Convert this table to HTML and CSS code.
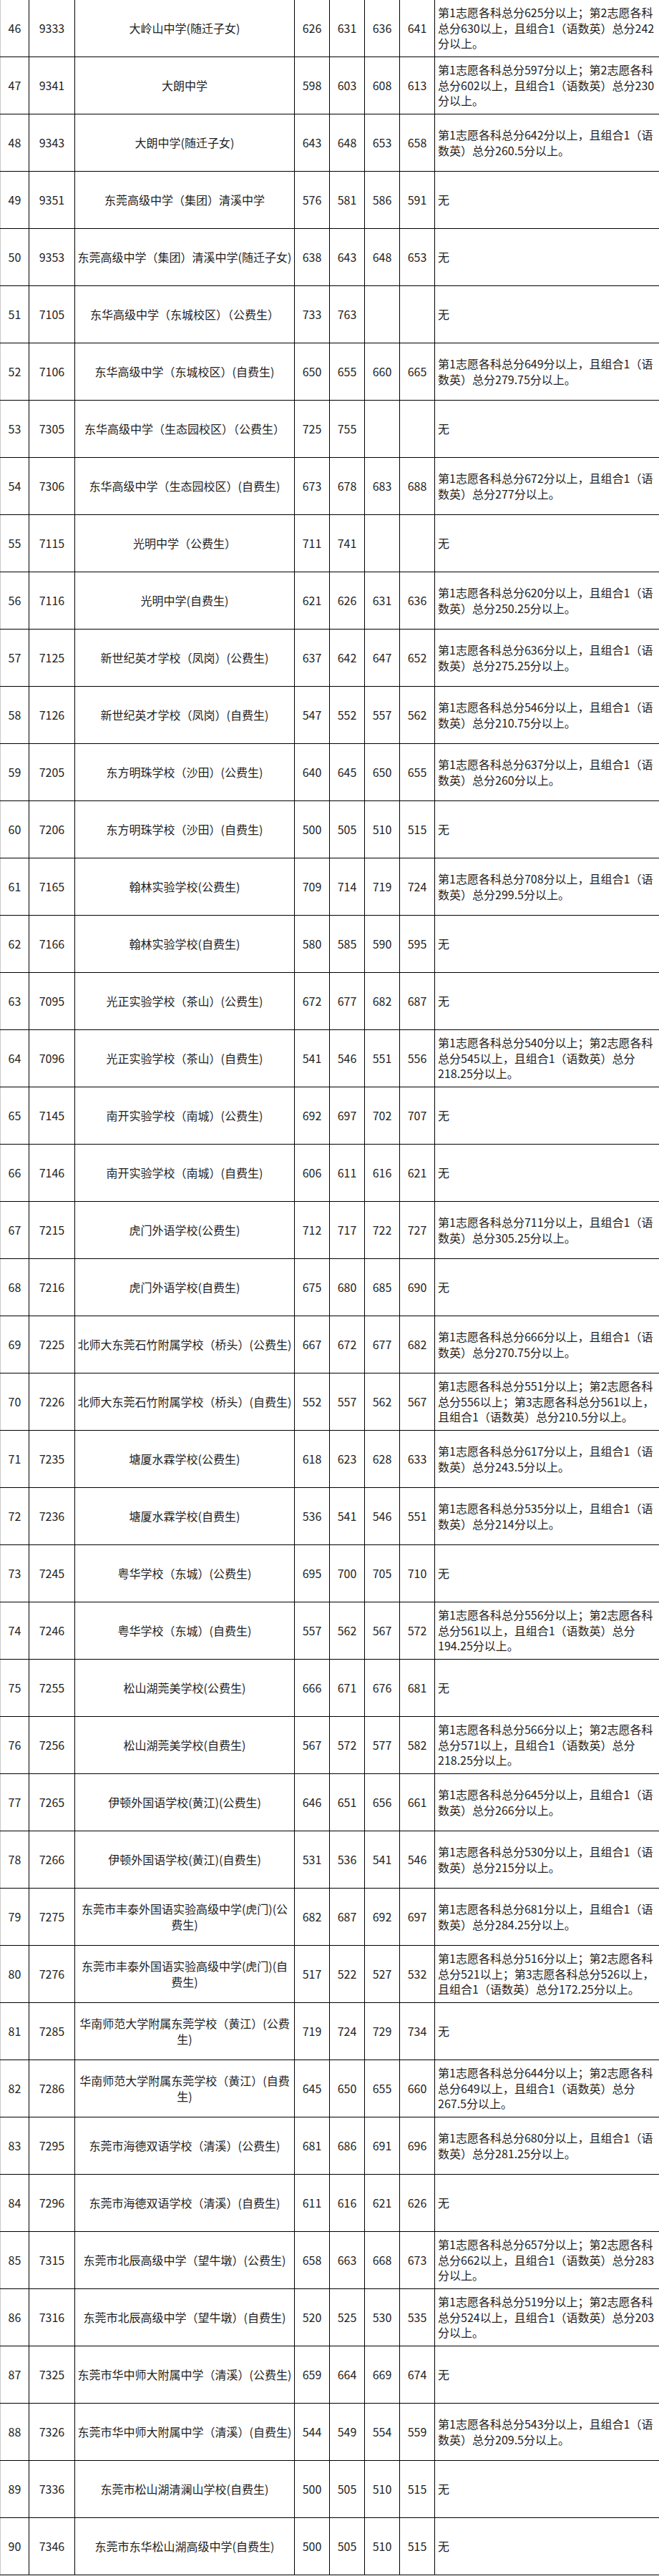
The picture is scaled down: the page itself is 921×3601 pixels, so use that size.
FILE: index.html
```html
<!DOCTYPE html>
<html lang="zh-CN">
<head>
<meta charset="utf-8">
<title>录取分数线</title>
<link rel="stylesheet" href="styles.css">
</head>
<body>
<table class="sheet">
<colgroup>
<col class="c-idx"><col class="c-code"><col class="c-name"><col class="c-s"><col class="c-s"><col class="c-s"><col class="c-s"><col class="c-rem">
</colgroup>
<tbody>
<tr><td>46</td><td>9333</td><td>大岭山中学(随迁子女)</td><td>626</td><td>631</td><td>636</td><td>641</td><td class="rem">第1志愿各科总分625分以上；第2志愿各科<br>总分630以上，且组合1（语数英）总分242<br>分以上。</td></tr>
<tr><td>47</td><td>9341</td><td>大朗中学</td><td>598</td><td>603</td><td>608</td><td>613</td><td class="rem">第1志愿各科总分597分以上；第2志愿各科<br>总分602以上，且组合1（语数英）总分230<br>分以上。</td></tr>
<tr><td>48</td><td>9343</td><td>大朗中学(随迁子女)</td><td>643</td><td>648</td><td>653</td><td>658</td><td class="rem">第1志愿各科总分642分以上，且组合1（语<br>数英）总分260.5分以上。</td></tr>
<tr><td>49</td><td>9351</td><td>东莞高级中学（集团）清溪中学</td><td>576</td><td>581</td><td>586</td><td>591</td><td class="rem">无</td></tr>
<tr><td>50</td><td>9353</td><td>东莞高级中学（集团）清溪中学(随迁子女)</td><td>638</td><td>643</td><td>648</td><td>653</td><td class="rem">无</td></tr>
<tr><td>51</td><td>7105</td><td>东华高级中学（东城校区）（公费生）</td><td>733</td><td>763</td><td></td><td></td><td class="rem">无</td></tr>
<tr><td>52</td><td>7106</td><td>东华高级中学（东城校区）(自费生)</td><td>650</td><td>655</td><td>660</td><td>665</td><td class="rem">第1志愿各科总分649分以上，且组合1（语<br>数英）总分279.75分以上。</td></tr>
<tr><td>53</td><td>7305</td><td>东华高级中学（生态园校区）（公费生）</td><td>725</td><td>755</td><td></td><td></td><td class="rem">无</td></tr>
<tr><td>54</td><td>7306</td><td>东华高级中学（生态园校区）(自费生)</td><td>673</td><td>678</td><td>683</td><td>688</td><td class="rem">第1志愿各科总分672分以上，且组合1（语<br>数英）总分277分以上。</td></tr>
<tr><td>55</td><td>7115</td><td>光明中学（公费生）</td><td>711</td><td>741</td><td></td><td></td><td class="rem">无</td></tr>
<tr><td>56</td><td>7116</td><td>光明中学(自费生)</td><td>621</td><td>626</td><td>631</td><td>636</td><td class="rem">第1志愿各科总分620分以上，且组合1（语<br>数英）总分250.25分以上。</td></tr>
<tr><td>57</td><td>7125</td><td>新世纪英才学校（凤岗）(公费生)</td><td>637</td><td>642</td><td>647</td><td>652</td><td class="rem">第1志愿各科总分636分以上，且组合1（语<br>数英）总分275.25分以上。</td></tr>
<tr><td>58</td><td>7126</td><td>新世纪英才学校（凤岗）(自费生)</td><td>547</td><td>552</td><td>557</td><td>562</td><td class="rem">第1志愿各科总分546分以上，且组合1（语<br>数英）总分210.75分以上。</td></tr>
<tr><td>59</td><td>7205</td><td>东方明珠学校（沙田）(公费生)</td><td>640</td><td>645</td><td>650</td><td>655</td><td class="rem">第1志愿各科总分637分以上，且组合1（语<br>数英）总分260分以上。</td></tr>
<tr><td>60</td><td>7206</td><td>东方明珠学校（沙田）(自费生)</td><td>500</td><td>505</td><td>510</td><td>515</td><td class="rem">无</td></tr>
<tr><td>61</td><td>7165</td><td>翰林实验学校(公费生)</td><td>709</td><td>714</td><td>719</td><td>724</td><td class="rem">第1志愿各科总分708分以上，且组合1（语<br>数英）总分299.5分以上。</td></tr>
<tr><td>62</td><td>7166</td><td>翰林实验学校(自费生)</td><td>580</td><td>585</td><td>590</td><td>595</td><td class="rem">无</td></tr>
<tr><td>63</td><td>7095</td><td>光正实验学校（茶山）(公费生)</td><td>672</td><td>677</td><td>682</td><td>687</td><td class="rem">无</td></tr>
<tr><td>64</td><td>7096</td><td>光正实验学校（茶山）(自费生)</td><td>541</td><td>546</td><td>551</td><td>556</td><td class="rem">第1志愿各科总分540分以上；第2志愿各科<br>总分545以上，且组合1（语数英）总分<br>218.25分以上。</td></tr>
<tr><td>65</td><td>7145</td><td>南开实验学校（南城）(公费生)</td><td>692</td><td>697</td><td>702</td><td>707</td><td class="rem">无</td></tr>
<tr><td>66</td><td>7146</td><td>南开实验学校（南城）(自费生)</td><td>606</td><td>611</td><td>616</td><td>621</td><td class="rem">无</td></tr>
<tr><td>67</td><td>7215</td><td>虎门外语学校(公费生)</td><td>712</td><td>717</td><td>722</td><td>727</td><td class="rem">第1志愿各科总分711分以上，且组合1（语<br>数英）总分305.25分以上。</td></tr>
<tr><td>68</td><td>7216</td><td>虎门外语学校(自费生)</td><td>675</td><td>680</td><td>685</td><td>690</td><td class="rem">无</td></tr>
<tr><td>69</td><td>7225</td><td>北师大东莞石竹附属学校（桥头）(公费生)</td><td>667</td><td>672</td><td>677</td><td>682</td><td class="rem">第1志愿各科总分666分以上，且组合1（语<br>数英）总分270.75分以上。</td></tr>
<tr><td>70</td><td>7226</td><td>北师大东莞石竹附属学校（桥头）(自费生)</td><td>552</td><td>557</td><td>562</td><td>567</td><td class="rem">第1志愿各科总分551分以上；第2志愿各科<br>总分556以上；第3志愿各科总分561以上，<br>且组合1（语数英）总分210.5分以上。</td></tr>
<tr><td>71</td><td>7235</td><td>塘厦水霖学校(公费生)</td><td>618</td><td>623</td><td>628</td><td>633</td><td class="rem">第1志愿各科总分617分以上，且组合1（语<br>数英）总分243.5分以上。</td></tr>
<tr><td>72</td><td>7236</td><td>塘厦水霖学校(自费生)</td><td>536</td><td>541</td><td>546</td><td>551</td><td class="rem">第1志愿各科总分535分以上，且组合1（语<br>数英）总分214分以上。</td></tr>
<tr><td>73</td><td>7245</td><td>粤华学校（东城）(公费生)</td><td>695</td><td>700</td><td>705</td><td>710</td><td class="rem">无</td></tr>
<tr><td>74</td><td>7246</td><td>粤华学校（东城）(自费生)</td><td>557</td><td>562</td><td>567</td><td>572</td><td class="rem">第1志愿各科总分556分以上；第2志愿各科<br>总分561以上，且组合1（语数英）总分<br>194.25分以上。</td></tr>
<tr><td>75</td><td>7255</td><td>松山湖莞美学校(公费生)</td><td>666</td><td>671</td><td>676</td><td>681</td><td class="rem">无</td></tr>
<tr><td>76</td><td>7256</td><td>松山湖莞美学校(自费生)</td><td>567</td><td>572</td><td>577</td><td>582</td><td class="rem">第1志愿各科总分566分以上；第2志愿各科<br>总分571以上，且组合1（语数英）总分<br>218.25分以上。</td></tr>
<tr><td>77</td><td>7265</td><td>伊顿外国语学校(黄江)(公费生)</td><td>646</td><td>651</td><td>656</td><td>661</td><td class="rem">第1志愿各科总分645分以上，且组合1（语<br>数英）总分266分以上。</td></tr>
<tr><td>78</td><td>7266</td><td>伊顿外国语学校(黄江)(自费生)</td><td>531</td><td>536</td><td>541</td><td>546</td><td class="rem">第1志愿各科总分530分以上，且组合1（语<br>数英）总分215分以上。</td></tr>
<tr><td>79</td><td>7275</td><td>东莞市丰泰外国语实验高级中学(虎门)(公<br>费生)</td><td>682</td><td>687</td><td>692</td><td>697</td><td class="rem">第1志愿各科总分681分以上，且组合1（语<br>数英）总分284.25分以上。</td></tr>
<tr><td>80</td><td>7276</td><td>东莞市丰泰外国语实验高级中学(虎门)(自<br>费生)</td><td>517</td><td>522</td><td>527</td><td>532</td><td class="rem">第1志愿各科总分516分以上；第2志愿各科<br>总分521以上；第3志愿各科总分526以上，<br>且组合1（语数英）总分172.25分以上。</td></tr>
<tr><td>81</td><td>7285</td><td>华南师范大学附属东莞学校（黄江）(公费<br>生)</td><td>719</td><td>724</td><td>729</td><td>734</td><td class="rem">无</td></tr>
<tr><td>82</td><td>7286</td><td>华南师范大学附属东莞学校（黄江）(自费<br>生)</td><td>645</td><td>650</td><td>655</td><td>660</td><td class="rem">第1志愿各科总分644分以上；第2志愿各科<br>总分649以上，且组合1（语数英）总分<br>267.5分以上。</td></tr>
<tr><td>83</td><td>7295</td><td>东莞市海德双语学校（清溪）(公费生)</td><td>681</td><td>686</td><td>691</td><td>696</td><td class="rem">第1志愿各科总分680分以上，且组合1（语<br>数英）总分281.25分以上。</td></tr>
<tr><td>84</td><td>7296</td><td>东莞市海德双语学校（清溪）(自费生)</td><td>611</td><td>616</td><td>621</td><td>626</td><td class="rem">无</td></tr>
<tr><td>85</td><td>7315</td><td>东莞市北辰高级中学（望牛墩）(公费生)</td><td>658</td><td>663</td><td>668</td><td>673</td><td class="rem">第1志愿各科总分657分以上；第2志愿各科<br>总分662以上，且组合1（语数英）总分283<br>分以上。</td></tr>
<tr><td>86</td><td>7316</td><td>东莞市北辰高级中学（望牛墩）(自费生)</td><td>520</td><td>525</td><td>530</td><td>535</td><td class="rem">第1志愿各科总分519分以上；第2志愿各科<br>总分524以上，且组合1（语数英）总分203<br>分以上。</td></tr>
<tr><td>87</td><td>7325</td><td>东莞市华中师大附属中学（清溪）(公费生)</td><td>659</td><td>664</td><td>669</td><td>674</td><td class="rem">无</td></tr>
<tr><td>88</td><td>7326</td><td>东莞市华中师大附属中学（清溪）(自费生)</td><td>544</td><td>549</td><td>554</td><td>559</td><td class="rem">第1志愿各科总分543分以上，且组合1（语<br>数英）总分209.5分以上。</td></tr>
<tr><td>89</td><td>7336</td><td>东莞市松山湖清澜山学校(自费生)</td><td>500</td><td>505</td><td>510</td><td>515</td><td class="rem">无</td></tr>
<tr><td>90</td><td>7346</td><td>东莞市东华松山湖高级中学(自费生)</td><td>500</td><td>505</td><td>510</td><td>515</td><td class="rem">无</td></tr>
</tbody>
</table>
</body>
</html>
```

FILE: styles.css
```css
html, body {
  margin: 0;
  padding: 0;
  background: #ffffff;
}

body {
  font-family: "Noto Sans CJK SC", "Noto Sans", sans-serif;
  font-size: 16px;
  color: #222222;
}

.sheet {
  border-collapse: collapse;
  table-layout: fixed;
  width: 922px;
  margin: -1px 0 0 0;
}

.c-idx { width: 40px; }
.c-code { width: 64px; }
.c-name { width: 307px; }
.c-s { width: 49px; }
.c-rem { width: 314px; }

.sheet tr {
  height: 80px;
}

.sheet td {
  border: 1px solid #000000;
  padding: 0 1px;
  text-align: center;
  vertical-align: middle;
  line-height: 21.5px;
  white-space: nowrap;
}

.sheet td:first-child {
  border-left-color: #c8c8c8;
}

.sheet td.rem {
  text-align: left;
  padding-left: 4px;
}
```
